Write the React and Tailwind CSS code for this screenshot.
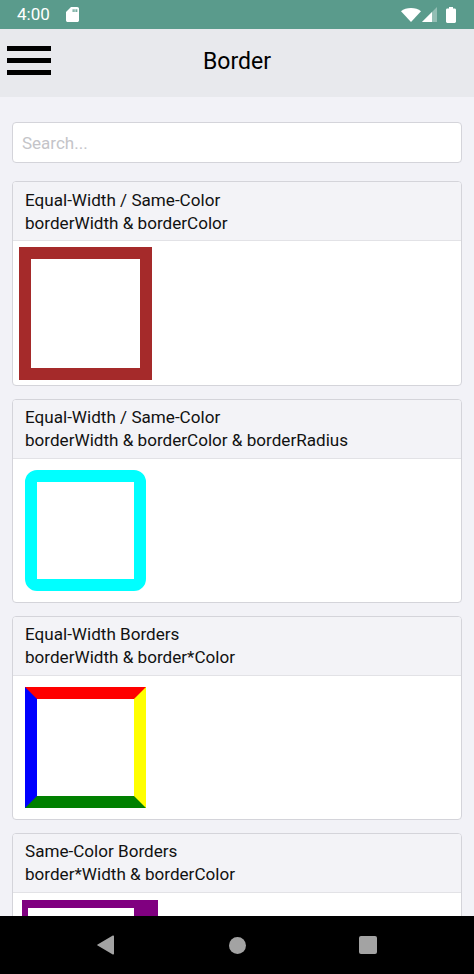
const FONT = "font-['Roboto','Liberation_Sans',sans-serif]";

function StatusBar() {
  return (
    <div className="flex h-[29px] shrink-0 items-center justify-between bg-[#5a9b8c] pl-[17px] pr-[18px] text-white">
      <div className="flex items-center gap-[16px]">
        <span className="text-[17px] leading-[29px]">4:00</span>
        <svg width="13" height="15" viewBox="0 0 13 15" aria-hidden="true">
          <path d="M5 0H11.2C12.2 0 13 .8 13 1.8V13.2C13 14.2 12.2 15 11.2 15H1.8C.8 15 0 14.2 0 13.2V5Z" fill="#fff" />
          <path d="M6.6 2.2h1.1v2.8H6.6zM8.4 2.2h1.1v2.8H8.4zM10.2 2.2h1.1v2.8h-1.1z" fill="#5a9b8c" />
        </svg>
      </div>
      <div className="flex items-center">
        <svg width="20" height="14" viewBox="0 0 20 14" aria-hidden="true">
          <path d="M0 3.2C2.6 1.2 6 0 10 0s7.4 1.2 10 3.2L10 14Z" fill="#fff" />
        </svg>
        <svg className="ml-[1px]" width="15" height="15" viewBox="0 0 15 15" aria-hidden="true">
          <path d="M15 0V15H0Z" fill="#fff" fillOpacity="0.35" />
          <path d="M10 5V15H0Z" fill="#fff" />
        </svg>
        <svg className="ml-[9px]" width="10" height="16" viewBox="0 0 10 16" aria-hidden="true">
          <path d="M3 0H7V1.6H8.6C9.4 1.6 10 2.2 10 3V14.6C10 15.4 9.4 16 8.6 16H1.4C.6 16 0 15.4 0 14.6V3C0 2.2.6 1.6 1.4 1.6H3Z" fill="#fff" />
        </svg>
      </div>
    </div>
  );
}

function Header() {
  return (
    <div className="relative flex h-[68px] shrink-0 items-center justify-center bg-[#e8e9ed] pb-[2px]">
      <div className="absolute left-[7px] top-[17px] flex w-[44px] flex-col gap-[7px]">
        <div className="h-[5px] bg-black" />
        <div className="h-[5px] bg-black" />
        <div className="h-[5px] bg-black" />
      </div>
      <span className="text-[23px] leading-[28px] text-black">Border</span>
    </div>
  );
}

function Card({ line1, line2, children, padding, first }) {
  return (
    <div className={`mx-[12px] mb-[13px] shrink-0 overflow-hidden rounded-[4px] border border-[#d4d4da] bg-white ${first ? "h-[205px]" : "h-[204px]"}`}>
      <div className={`flex h-[59px] flex-col justify-center border-b border-[#e2e2e6] bg-[#f3f3f7] px-[12px] text-[17.1px] leading-[23px] text-[#111] ${first ? "pt-[2px]" : ""}`}>
        <div>{line1}</div>
        <div>{line2}</div>
      </div>
      <div className={padding}>{children}</div>
    </div>
  );
}

function NavBar() {
  return (
    <div className="flex h-[58px] shrink-0 items-center justify-between bg-black px-[97px]">
      <svg width="18" height="20" viewBox="0 0 18 20" aria-hidden="true">
        <path d="M17 1.2V18.8a.8.8 0 0 1-1.2.6L.6 10.6a.7.7 0 0 1 0-1.2L15.8.6a.8.8 0 0 1 1.2.6Z" fill="#a3a3a3" />
      </svg>
      <div className="h-[17px] w-[17px] rounded-full bg-[#a3a3a3]" />
      <div className="h-[18px] w-[18px] rounded-[2px] bg-[#a3a3a3]" />
    </div>
  );
}

export default function App() {
  return (
    <div className={`flex h-[974px] w-[474px] flex-col overflow-hidden bg-[#f2f2f7] ${FONT}`}>
      <StatusBar />
      <Header />
      <div className="flex min-h-0 flex-1 flex-col overflow-hidden">
        <div className="mx-[12px] mb-[18px] mt-[25px] flex h-[41px] shrink-0 items-center rounded-[4px] border border-[#d4d4da] bg-white px-[9px] pt-[2px]">
          <span className="text-[17px] text-[#c4c4c8]">Search...</span>
        </div>
        <Card first line1="Equal-Width / Same-Color" line2="borderWidth & borderColor" padding="px-[6px] py-[6px]">
          <div className="h-[133px] w-[133px] border-[12px] border-[#a52a2a] bg-white" />
        </Card>
        <Card line1="Equal-Width / Same-Color" line2="borderWidth & borderColor & borderRadius" padding="px-[12px] py-[11px]">
          <div className="h-[121px] w-[121px] rounded-[12px] border-[12px] border-[#00ffff] bg-white" />
        </Card>
        <Card line1="Equal-Width Borders" line2="borderWidth & border*Color" padding="px-[12px] py-[11px]">
          <div className="h-[121px] w-[121px] border-[12px] border-t-[#ff0000] border-r-[#ffff00] border-b-[#008000] border-l-[#0000ff] bg-white" />
        </Card>
        <Card line1="Same-Color Borders" line2="border*Width & borderColor" padding="px-[9px] py-[7px]">
          <div className="h-[136px] w-[136px] border-t-[8px] border-r-[24px] border-b-[8px] border-l-[6px] border-[#800080] bg-white" />
        </Card>
      </div>
      <NavBar />
    </div>
  );
}
